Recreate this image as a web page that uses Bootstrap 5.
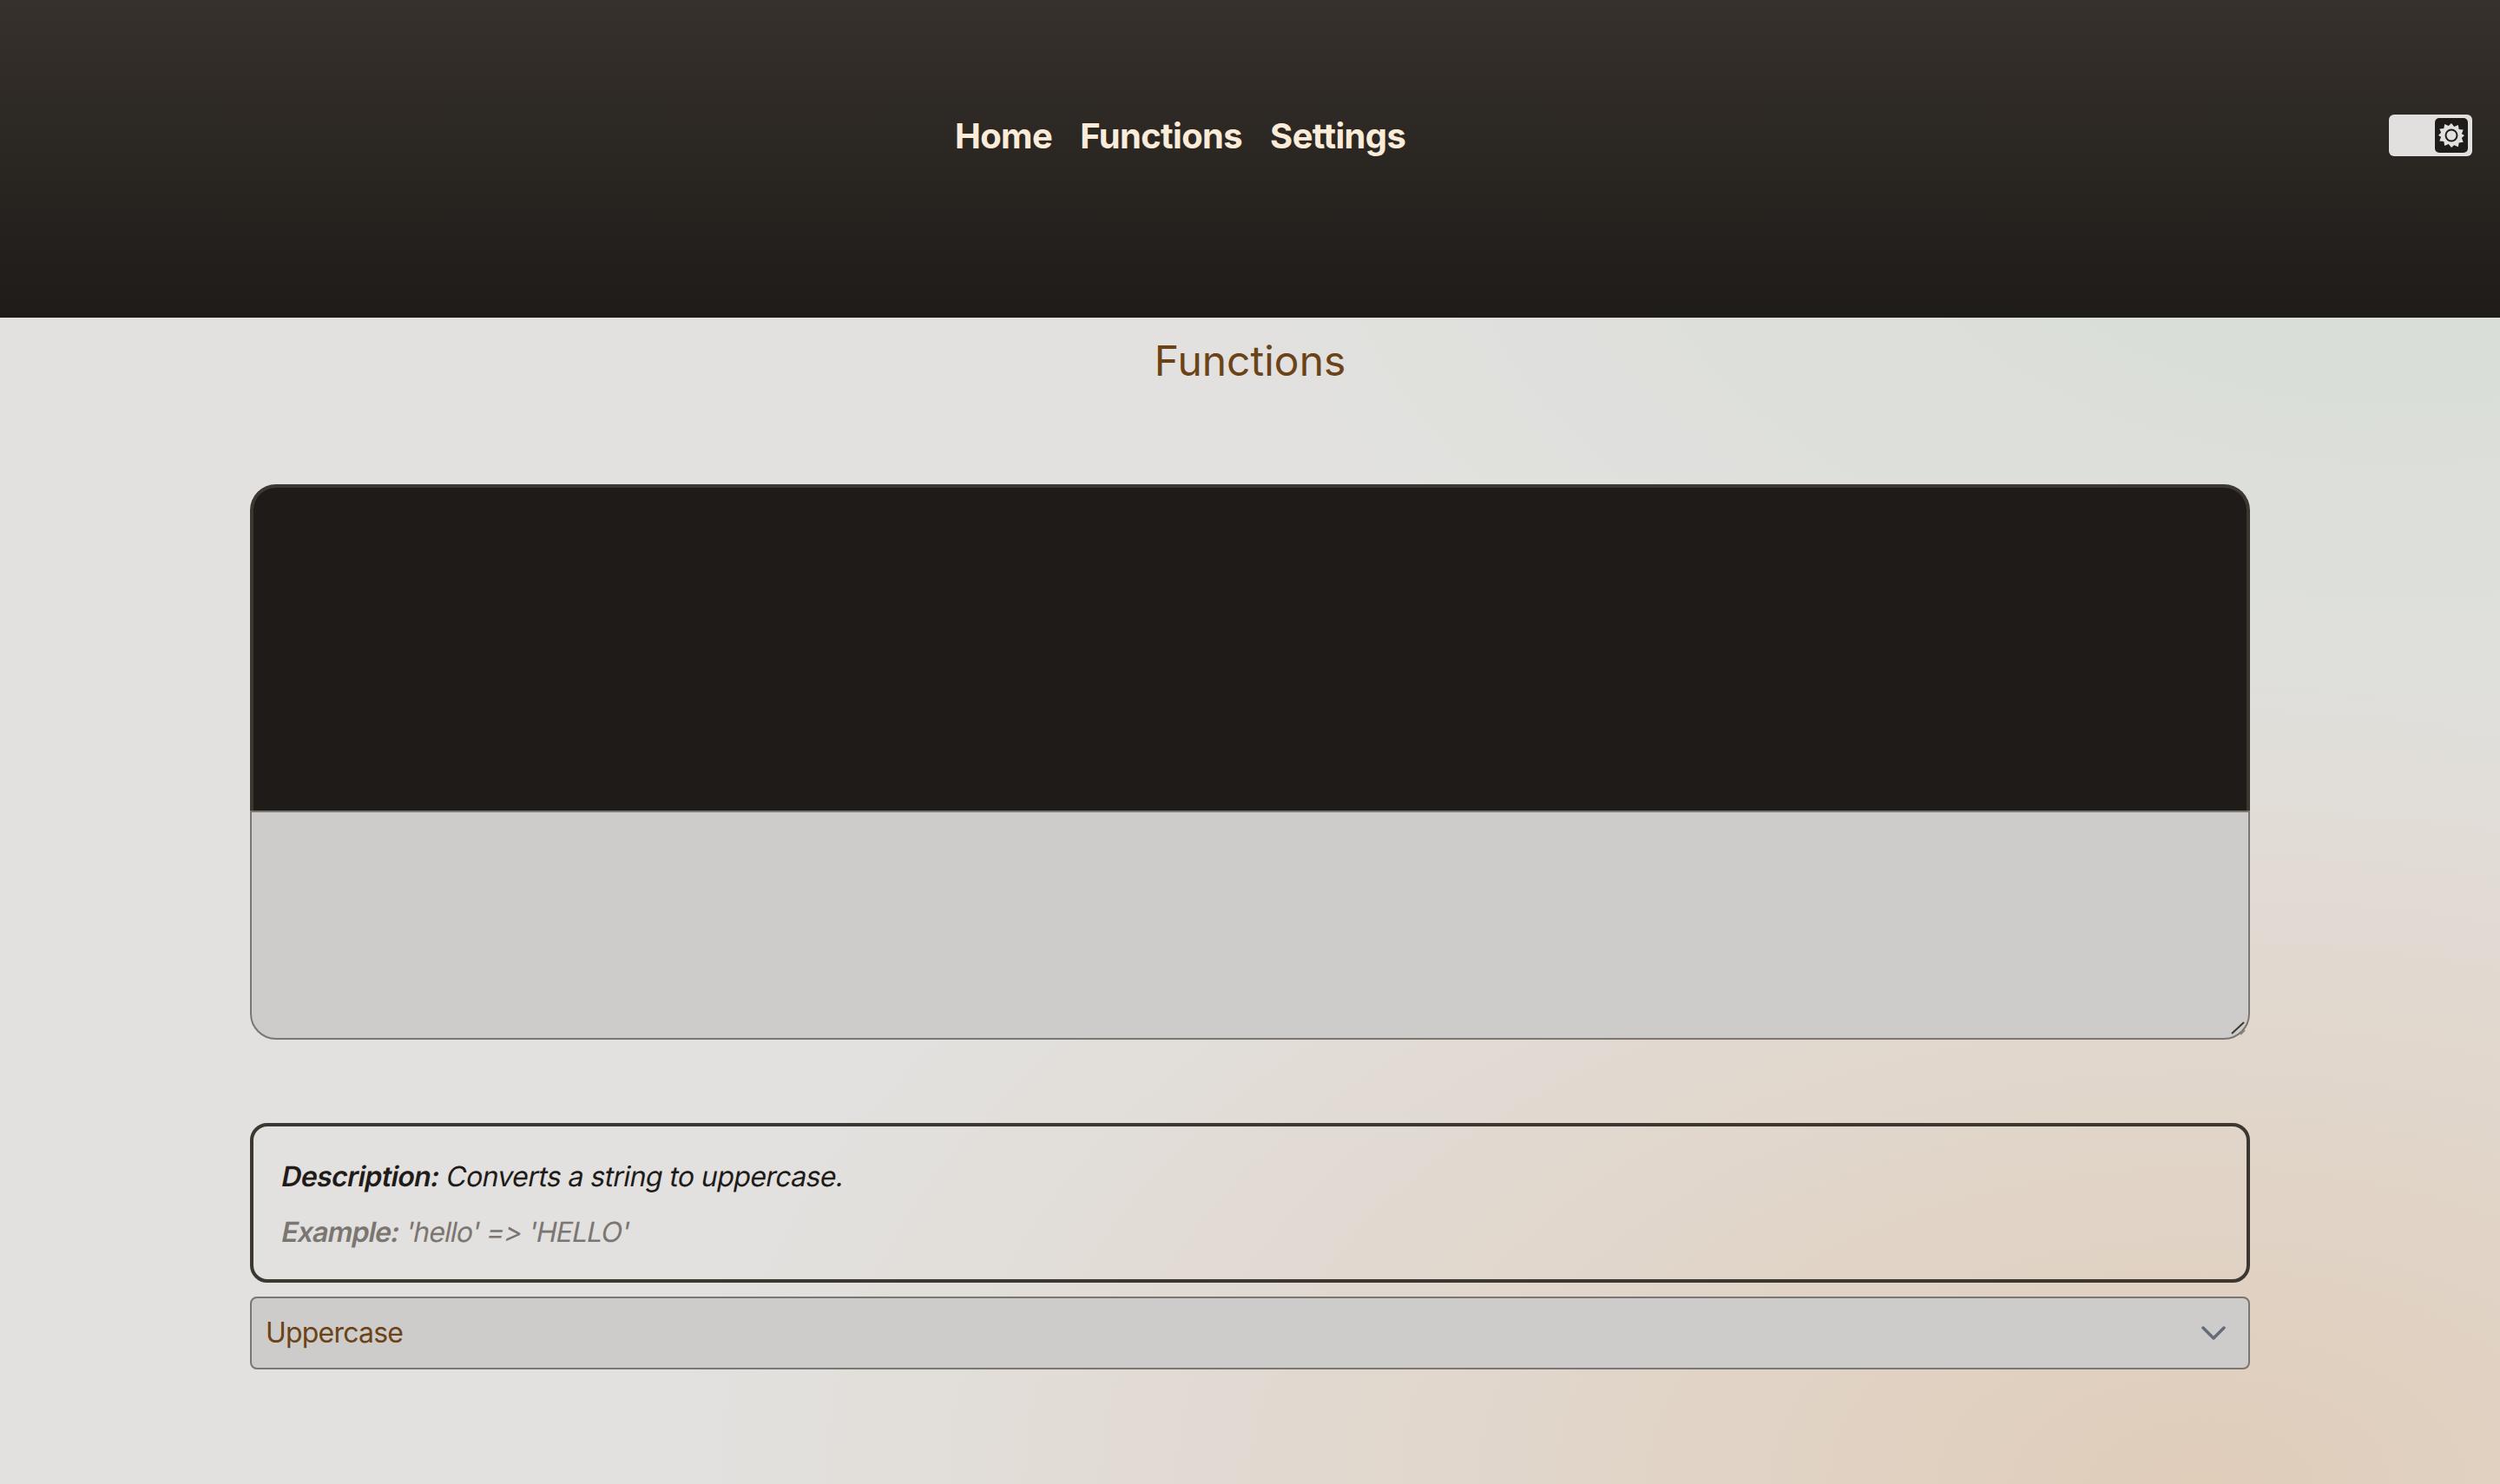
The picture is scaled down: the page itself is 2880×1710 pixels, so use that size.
<!DOCTYPE html>
<html lang="en">
<head>
    <meta charset="UTF-8">
    <meta name="viewport" content="width=device-width, initial-scale=1.0">
    <title>Functions</title>
    <link href="https://cdn.jsdelivr.net/npm/bootstrap@5.3.0/dist/css/bootstrap.min.css" rel="stylesheet">
    <style>
        html, body {
            height: 100%;
        }
        body {
            font-family: Inter, "Liberation Sans", sans-serif;
            background-color: #e2e1df;
            background-image:
                radial-gradient(1400px 720px at 96% 14%, #d7ddd6 0%, rgba(215, 221, 214, 0) 100%),
                radial-gradient(1750px 1000px at 88% 100%, #e0cdba 0%, rgba(224, 205, 186, 0) 100%);
            min-height: 1710px;
        }
        .top-bar {
            height: 366px;
            padding: 129px 32px 0 1100px;
            background: linear-gradient(180deg, #36312c 0%, #1f1b18 100%);
        }
        .top-links {
            gap: 32px;
        }
        .top-link {
            font-size: 40px;
            font-weight: 700;
            line-height: 56px;
            letter-spacing: -0.65px;
            color: #fbebd9;
            text-decoration: none;
        }
        .theme-switch {
            width: 96px;
            height: 48px;
            margin-top: 3px;
            padding: 4px 5px 4px 0;
            background: #e1e0de;
            border-radius: 6px;
        }
        .theme-knob {
            width: 38px;
            height: 40px;
            background: #1f1b18;
            border-radius: 5px;
        }
        .page-title {
            margin: 0;
            padding-top: 20px;
            font-size: 48px;
            font-weight: 400;
            line-height: 60px;
            text-align: center;
            color: #6b4317;
        }
        .work-area {
            padding: 112px 288px 0;
        }
        .editor-top {
            height: 376px;
            background: #1f1b18;
            border: 4px solid #3c3730;
            border-bottom: 0;
            border-radius: 30px 30px 0 0;
        }
        .editor-bottom.form-control {
            display: block;
            height: 264px;
            background: #cdccca;
            border: 2px solid #7b7671;
            border-radius: 0 0 30px 30px;
            box-shadow: none;
            resize: none;
        }
        .grip {
            position: absolute;
            right: 3px;
            bottom: 3px;
            pointer-events: none;
        }
        .info-box {
            margin-top: 96px;
            height: 184px;
            padding: 34px 31px;
            border: 4px solid #3c3730;
            border-radius: 20px;
            font-size: 32px;
            line-height: 48px;
            font-variant-ligatures: none;
            font-feature-settings: "calt" 0;
        }
        .info-box strong {
            font-weight: 600;
        }
        /* the reference slants the upright Inter, its "a" stays two-storey */
        .info-box p {
            margin: 0 0 16px;
            letter-spacing: -0.59px;
            color: #1f1b18;
            transform: skewX(-11deg);
            transform-origin: 0 70%;
        }
        .info-box p.example-line {
            margin: 0;
            letter-spacing: -0.89px;
            color: #7b7671;
        }
        .func-select.form-select {
            margin-top: 16px;
            height: 84px;
            padding: 0 16px;
            font-family: Inter, "Liberation Sans", sans-serif;
            font-size: 32px;
            letter-spacing: -0.8px;
            color: #6b4317;
            background-color: #cdccca;
            background-image: url("data:image/svg+xml,%3csvg xmlns='http://www.w3.org/2000/svg' viewBox='0 0 16 16'%3e%3cpath fill='none' stroke='%23656b78' stroke-linecap='round' stroke-linejoin='round' stroke-width='1.75' d='m2 5 6 6 6-6'/%3e%3c/svg%3e");
            background-position: right 24px center;
            background-size: 32px 32px;
            border: 2px solid #7b7671;
            border-radius: 8px;
        }
    </style>
</head>
<body>
    <header class="top-bar d-flex justify-content-between align-items-start">
        <nav class="top-links d-flex align-items-center">
            <a class="top-link" href="#">Home</a>
            <a class="top-link" href="#">Functions</a>
            <a class="top-link" href="#">Settings</a>
        </nav>
        <div class="theme-switch d-flex justify-content-end">
            <div class="theme-knob d-flex align-items-center justify-content-center">
                <svg width="30" height="30" viewBox="0 0 30 30">
                    <path fill="#e1e0de" fill-rule="evenodd" d="M15 1l3.2 4 4.6-2 .9 4.9 5 .6-1.8 4.7 3.1 1.8-3.1 3.1 1.8 4.7-5 .6-.9 4.9-4.6-2L15 29l-3.2-4-4.6 2-.9-4.9-5-.6 1.8-4.7L0 15l3.1-3.3-1.8-4.2 5-.6.9-4.9 4.6 2z"/>
                    <circle cx="15" cy="15" r="7.5" fill="#1f1b18"/>
                    <circle cx="15" cy="15" r="5.5" fill="#e1e0de"/>
                </svg>
            </div>
        </div>
    </header>

    <main>
        <h1 class="page-title">Functions</h1>
        <div class="work-area">
            <div class="editor-top"></div>
            <div class="position-relative">
                <textarea class="editor-bottom form-control"></textarea>
                <svg class="grip" width="22" height="22" viewBox="0 0 22 22">
                    <path d="M4 18 18 5" stroke="#3c3730" stroke-width="2"/>
                    <path d="M14 19 19 14" stroke="#8a8580" stroke-width="2"/>
                </svg>
            </div>
            <div class="info-box">
                <p><strong>Description:</strong> Converts a string to uppercase.</p>
                <p class="example-line"><strong>Example:</strong> 'hello' =&gt; 'HELLO'</p>
            </div>
            <select class="func-select form-select">
                <option>Uppercase</option>
                <option>Lowercase</option>
            </select>
        </div>
    </main>

    <script src="https://cdn.jsdelivr.net/npm/bootstrap@5.3.0/dist/js/bootstrap.bundle.min.js"></script>
</body>
</html>
